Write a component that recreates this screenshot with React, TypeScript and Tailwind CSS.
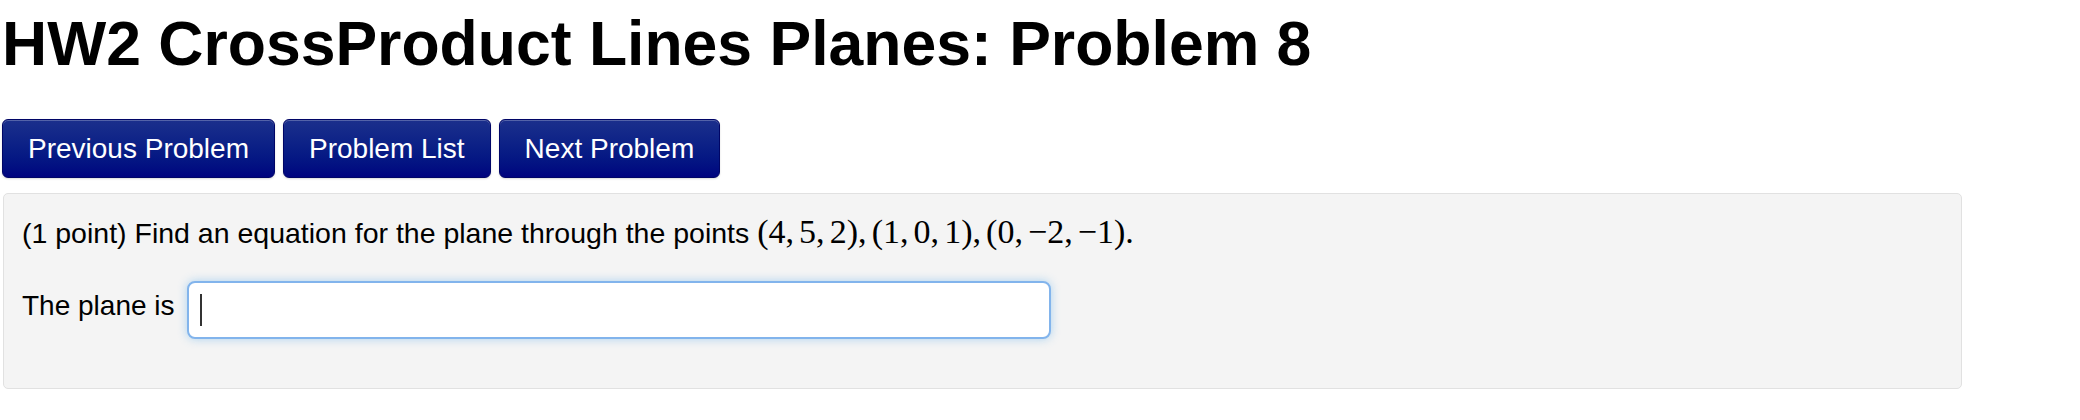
import React from "react";

const buttons = ["Previous Problem", "Problem List", "Next Problem"];

// one coordinate triple, typeset roughly like MathJax does
function Tuple({ parts, last }: { parts: string[]; last: string }) {
  return (
    <>
      (
      {parts.map((p, i) => (
        <React.Fragment key={i}>
          {p}
          {i < parts.length - 1 && <span className="mr-[0.15em]">,</span>}
        </React.Fragment>
      ))}
      ){last && <span className="mr-[0.15em]">{last}</span>}
    </>
  );
}

export default function App() {
  return (
    <div className="w-[2080px] h-[420px] bg-white pl-[2px] text-black font-['Liberation_Sans',Arial,sans-serif]">
      <h1 className="pt-[11px] text-[62.5px] leading-[64px] font-bold">
        HW2 CrossProduct Lines Planes: Problem 8
      </h1>

      <div className="mt-[44px] flex gap-[8px]">
        {buttons.map((b) => (
          <button
            key={b}
            className="h-[59px] px-[25px] rounded-[6px] border border-[#000566] bg-gradient-to-b from-[#1b2f8c] to-[#00037f] text-white text-[28px] leading-none shadow-[inset_0_1px_0_rgba(255,255,255,0.25),0_1px_2px_rgba(0,0,0,0.15)]"
          >
            {b}
          </button>
        ))}
      </div>

      <div className="mt-[15px] ml-[1px] w-[1959px] h-[196px] rounded-[5px] border border-[#e1e1e1] bg-[#f4f4f4] pt-[19px] pl-[18px]">
        <p className="text-[28.5px] leading-[40px]">
          (1 point) Find an equation for the plane through the points{" "}
          <span className="font-['Liberation_Serif','Times_New_Roman',serif] text-[34px] leading-none">
            <Tuple parts={["4", "5", "2"]} last="," />
            <Tuple parts={["1", "0", "1"]} last="," />
            <Tuple parts={["0", "−2", "−1"]} last="" />.
          </span>
        </p>

        <div className="mt-[28px] flex items-center">
          <span className="text-[28px] mb-[8px]">The plane is</span>
          <div className="relative ml-[12px]">
            <input
              type="text"
              readOnly
              className="w-[864px] h-[58px] rounded-[8px] border-2 border-[#82b4ec] bg-white px-[12px] text-[28px] outline-none shadow-[0_0_10px_rgba(82,168,236,0.45)]"
            />
            <span className="absolute left-[13px] top-[13px] h-[32px] w-[2px] bg-[#333]" />
          </div>
        </div>
      </div>
    </div>
  );
}
